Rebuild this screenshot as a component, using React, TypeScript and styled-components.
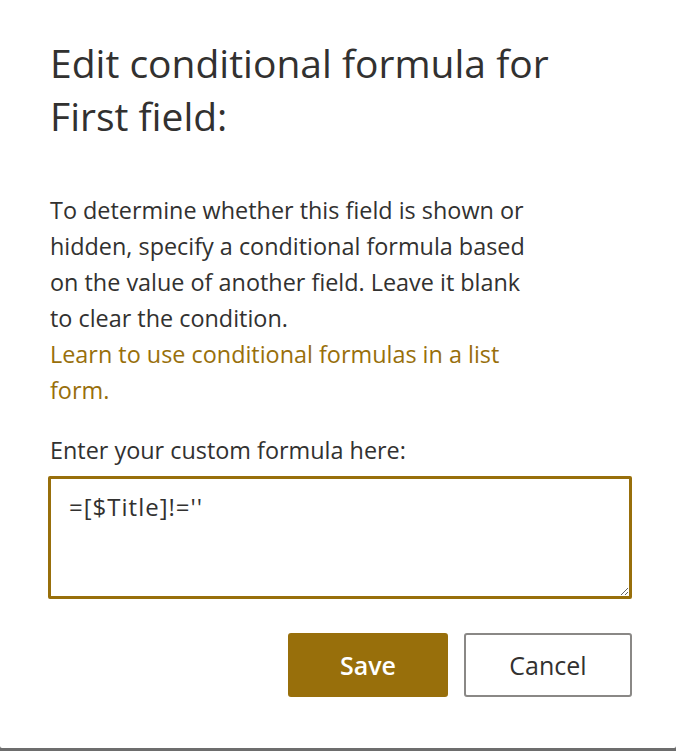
import React from 'react';
import styled, { createGlobalStyle } from 'styled-components';

const GlobalStyle = createGlobalStyle`
  html, body {
    margin: 0;
    padding: 0;
    background: #6d6d6d;
  }
  body {
    font-family: "Open Sans", "Noto Sans", sans-serif;
    color: #323130;
  }
`;

const Dialog = styled.div`
  box-sizing: border-box;
  width: 676px;
  height: 748px;
  background: #ffffff;
  border-radius: 0 0 2px 2px;
  padding: 36px 44px 0 50px;
  display: flex;
  flex-direction: column;
`;

const Title = styled.h1`
  margin: 0;
  max-width: 560px;
  font-size: 39px;
  line-height: 53px;
  font-weight: 500;
  color: #323130;
`;

const Body = styled.div`
  margin-top: 50px;
  max-width: 494px;
  font-size: 23.4px;
  line-height: 36px;
`;

const Text = styled.p`
  margin: 0;
`;

const Link = styled.a`
  color: #986f0b;
  text-decoration: none;
  cursor: pointer;
`;

const Label = styled.label`
  display: block;
  margin-top: 24px;
  font-size: 23.4px;
  line-height: 36px;
`;

const Formula = styled.textarea`
  box-sizing: border-box;
  display: block;
  margin: 8px 0 0 -2px;
  width: 584px;
  height: 123px;
  padding: 12px 18px;
  border: 3px solid #986f0b;
  border-radius: 2px;
  outline: none;
  font-family: "Open Sans", "Noto Sans", sans-serif;
  font-size: 24px;
  line-height: 32px;
  letter-spacing: 1px;
  color: #323130;
  background: #ffffff;
  caret-color: #323130;
`;

const Actions = styled.div`
  display: flex;
  justify-content: flex-end;
  gap: 16px;
  margin-top: 34px;
`;

const Button = styled.button<{ primary?: boolean }>`
  box-sizing: border-box;
  height: 64px;
  width: ${p => (p.primary ? '160px' : '168px')};
  border-radius: 3px;
  border: 2px solid ${p => (p.primary ? '#986f0b' : '#8a8886')};
  background: ${p => (p.primary ? '#986f0b' : '#ffffff')};
  color: ${p => (p.primary ? '#ffffff' : '#323130')};
  font-family: "Open Sans", "Noto Sans", sans-serif;
  font-size: 25px;
  font-weight: ${p => (p.primary ? 600 : 400)};
  cursor: pointer;
`;

export default function App() {
  return (
    <>
      <GlobalStyle />
      <Dialog>
        <Title>Edit conditional formula for First field:</Title>
        <Body>
          <Text>
            To determine whether this field is shown or hidden, specify a conditional formula based on the value of
            another field. Leave it blank to clear the condition.
          </Text>
          <Link>Learn to use conditional formulas in a list form.</Link>
        </Body>
        <Label htmlFor="formula">Enter your custom formula here:</Label>
        <Formula id="formula" defaultValue="=[$Title]!=''" autoFocus />
        <Actions>
          <Button primary>Save</Button>
          <Button>Cancel</Button>
        </Actions>
      </Dialog>
    </>
  );
}
